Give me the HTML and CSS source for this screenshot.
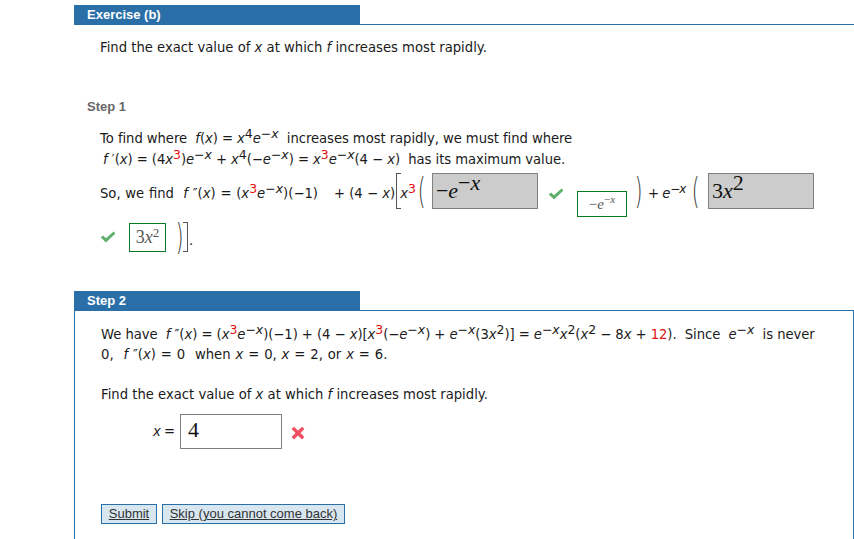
FILE: index.html
```html
<!DOCTYPE html>
<html lang="en">
<head>
<meta charset="utf-8">
<title>Exercise (b)</title>
<link rel="stylesheet" href="styles.css">
</head>
<body>
<main class="page">
  <section class="exercise">
    <header class="bar-row"><h2 class="bar">Exercise (b)</h2></header>
    <p class="prompt">Find the exact value of <i>x</i> at which <i>f</i> increases most rapidly.</p>
  </section>

  <section class="step-one">
    <h3 class="step-label">Step 1</h3>
    <p class="line math first">To find where&nbsp; <i>f</i>(<i>x</i>) = <i>x</i><sup>4</sup><i>e</i><sup>−<i>x</i></sup>&nbsp; increases most rapidly, we must find where</p>
    <p class="line math second"><i class="lead">f</i> ′(<i>x</i>) = (4<i>x</i><sup class="red">3</sup>)<i>e</i><sup>−<i>x</i></sup> + <i>x</i><sup>4</sup>(−<i>e</i><sup>−<i>x</i></sup>) = <i>x</i><sup class="red">3</sup><i>e</i><sup>−<i>x</i></sup>(4 − <i>x</i>)&nbsp; has its maximum value.</p>
    <div class="line third">
      <span class="so">So, we find&nbsp; <i>f</i> ″(<i>x</i>) = (<i>x</i><sup class="red">3</sup><i>e</i><sup>−<i>x</i></sup>)(−1)</span>
      <span class="factor">+ (4 − <i>x</i>)</span>
      <span class="bracket"></span>
      <span class="cube"><i>x</i><sup class="red">3</sup></span>
      <span class="big-paren open">(</span>
      <span class="answer"><span class="answer-math">−<i>e</i><sup>−<i>x</i></sup></span></span>
      <svg class="check" viewBox="0 0 16 12" aria-hidden="true"><path d="M.8 6.5 3 4.6 6 7.2 13.6.6 15.4 2.4 6 11.6Z"/></svg>
      <span class="correct small"><span>−<i>e</i><sup>−<i>x</i></sup></span></span>
      <span class="big-paren close">)</span>
      <span class="after-paren">+ <i>e</i><sup>−<i>x</i></sup></span>
      <span class="big-paren second-open">(</span>
      <span class="answer last"><span class="answer-math">3<i>x</i><sup>2</sup></span></span>
    </div>
    <div class="line fourth">
      <svg class="check" viewBox="0 0 16 12" aria-hidden="true"><path d="M.8 6.5 3 4.6 6 7.2 13.6.6 15.4 2.4 6 11.6Z"/></svg>
      <span class="correct wide"><span>3<i>x</i><sup>2</sup></span></span>
      <span class="big-paren end">)</span>
      <span class="bracket end"></span>
      <span class="dot">.</span>
    </div>
  </section>

  <section class="step-two">
    <header class="bar-row"><h2 class="bar">Step 2</h2></header>
    <div class="box">
      <p class="line math">We have&nbsp; <i>f</i> ″(<i>x</i>) = (<i>x</i><sup class="red">3</sup><i>e</i><sup>−<i>x</i></sup>)(−1) + (4 − <i>x</i>)[<i>x</i><sup class="red">3</sup>(−<i>e</i><sup>−<i>x</i></sup>) + <i>e</i><sup>−<i>x</i></sup>(3<i>x</i><sup>2</sup>)] = <i>e</i><sup>−<i>x</i></sup><i>x</i><sup>2</sup>(<i>x</i><sup>2</sup> − 8<i>x</i> + <span class="red">12</span>).&nbsp; Since&nbsp; <i>e</i><sup>−<i>x</i></sup>&nbsp; is never</p>
      <p class="line spaced">0,&nbsp; <i>f</i> ″(<i>x</i>) = 0&nbsp; when <i>x</i> = 0, <i>x</i> = 2, or <i>x</i> = 6.</p>
      <p class="line find">Find the exact value of <i>x</i> at which <i>f</i> increases most rapidly.</p>
      <div class="answer-row">
        <span class="x-eq"><i>x</i> =</span>
        <span class="entry">4</span>
        <svg class="cross" viewBox="0 0 14 14" aria-hidden="true"><path d="M3 .8 7 4.6 11 .8 13.4 3 9.5 7 13.4 11 11 13.4 7 9.5 3 13.4 .6 11 4.5 7 .6 3Z"/></svg>
      </div>
      <div class="actions">
        <button class="btn" type="button">Submit</button>
        <button class="btn" type="button">Skip (you cannot come back)</button>
      </div>
    </div>
  </section>
</main>
</body>
</html>
```
FILE: styles.css
```css
* { box-sizing: border-box; }
html, body { margin: 0; padding: 0; background: #fff; }
body { width: 854px; height: 539px; overflow: hidden; font-family: "DejaVu Sans", Verdana, sans-serif; font-size: 13.2px; color: #1a1a1a; }
.page { padding: 5px 0 0 74px; }
p, h2, h3 { margin: 0; }
i { font-style: italic; }
sup { font-size: 12.5px; line-height: 0; vertical-align: 5px; }
sup i { font-size: inherit; }
.red { color: #e01010; }

.bar-row { border-bottom: 1px solid #2a6fa8; height: 20px; }
.bar { width: 286px; height: 20px; background: #2a6fa8; color: #fff; font: bold 13px/20px "Liberation Sans", Arial, sans-serif; padding-left: 13px; }
.prompt { padding: 15px 0 0 26px; line-height: 15px; white-space: nowrap; }

.step-one { padding: 44px 0 0 13px; }
.step-label { font: bold 13px/15px "Liberation Sans", Arial, sans-serif; color: #666; }
.line { white-space: nowrap; line-height: 20px; margin: 0; }
.math { letter-spacing: -.06px; }
.spaced { word-spacing: .7px; }
.step-one .line { margin-left: 13px; }
.first { margin-top: 15px; }
.second { margin-top: 1px; }
.lead { margin-left: 3px; }
.third { display: flex; align-items: center; height: 36px; margin-top: 3px; }
.so { margin-top: 5px; word-spacing: .5px; }
.factor { margin: 5px 0 0 16px; }
.bracket { width: 5px; height: 36px; margin-left: 1px; border: 1px solid #555; border-right: 0; }
.cube { margin: 5px 0 0 -1px; }
.big-paren { font: 300 36px/36px "DejaVu Sans", sans-serif; transform: scaleX(.55); width: 12px; text-align: center; color: #333; }
.big-paren.open { margin-left: -1px; }
.answer { width: 106px; height: 36px; margin-left: 5px; background: #ccc; border: 1px solid #808080; font: 22px/1 "Liberation Serif", serif; color: #111; padding: 6px 0 0 3px; }
.answer-math sup { font-size: 22px; vertical-align: 8px; }
.check { width: 16px; height: 12px; fill: #5fae6a; }
.third .check { margin-left: 10px; margin-top: 6px; }
.correct { border: 1px solid #0a7a24; background: #fff; font: 15px/1 "Liberation Serif", serif; color: #555; display: flex; align-items: center; justify-content: center; }
.correct sup { font-size: 11px; vertical-align: 6px; }
.correct.small { width: 50px; height: 26px; margin-left: 13px; margin-top: 26px; }
.correct.wide { width: 37px; height: 29px; font-size: 18px; margin-left: 13px; }
.correct.wide sup { font-size: 13px; }
.big-paren.close { margin-left: 5px; }
.after-paren { width: 39px; margin: 5px 0 0 4px; word-spacing: -1px; }
.after-paren sup { letter-spacing: -1px; font-size: 12px; }
.second-open { margin-left: 2px; }
.answer.last { margin-left: 7px; }
.fourth { display: flex; align-items: center; height: 30px; margin-top: 13px; }
.big-paren.end { margin-left: 7px; }
.bracket.end { margin-left: -2px; height: 30px; transform: scaleX(-1); }
.dot { margin: 8px 0 0 1px; }

.step-two { padding-top: 39px; }
.step-two .bar-row { border-bottom: 0; }
.box { height: 240px; border: 1px solid #2a6fa8; margin-top: -1px; padding: 14px 0 0 26px; width: 780px; }
.find { margin-top: 20px; }
.answer-row { display: flex; align-items: center; margin: 9px 0 0 52px; height: 35px; }
.x-eq { margin-right: 5px; word-spacing: -1px; }
.entry { width: 102px; height: 35px; border: 1px solid #808080; font: 22px/1 "Liberation Serif", serif; padding: 4px 0 0 7px; color: #111; }
.cross { width: 14px; height: 14px; fill: #f0505f; margin-left: 9px; margin-top: 3px; }
.actions { display: flex; gap: 5px; margin-top: 55px; }
.btn { height: 20px; padding: 0; background: #d8e6f0; border: 1px solid #2a6fa8; font: 13px/18px "Liberation Sans", Arial, sans-serif; color: #333; text-decoration: underline; cursor: pointer; }
.btn:first-child { width: 56px; }
.btn:last-child { width: 183px; }
```
